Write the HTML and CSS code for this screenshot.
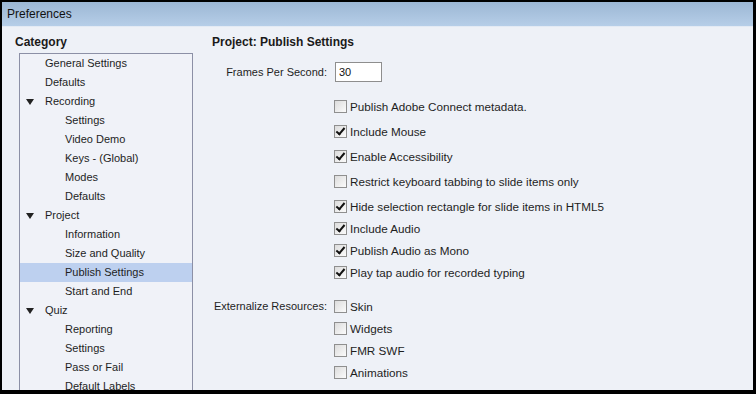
FILE: index.html
```html
<!DOCTYPE html>
<html lang="en">
<head>
    <meta charset="UTF-8">
    <title>Preferences</title>
    <link rel="stylesheet" href="styles.css">
</head>
<body>
    <div class="window">
        <div class="titlebar">Preferences</div>
        <div class="content">
            <!-- Category tree -->
            <div class="sidebar">
                <div class="heading category">Category</div>
                <div class="tree">
                    <div class="row">General Settings</div>
                    <div class="row">Defaults</div>
                    <div class="row group"><span class="arrow"></span>Recording</div>
                    <div class="row sub">Settings</div>
                    <div class="row sub">Video Demo</div>
                    <div class="row sub">Keys - (Global)</div>
                    <div class="row sub">Modes</div>
                    <div class="row sub">Defaults</div>
                    <div class="row group"><span class="arrow"></span>Project</div>
                    <div class="row sub">Information</div>
                    <div class="row sub">Size and Quality</div>
                    <div class="row sub selected">Publish Settings</div>
                    <div class="row sub">Start and End</div>
                    <div class="row group"><span class="arrow"></span>Quiz</div>
                    <div class="row sub">Reporting</div>
                    <div class="row sub">Settings</div>
                    <div class="row sub">Pass or Fail</div>
                    <div class="row sub">Default Labels</div>
                </div>
            </div>

            <!-- Settings panel -->
            <div class="main">
                <div class="heading">Project: Publish Settings</div>

                <div class="field fps">
                    <label class="field-label">Frames Per Second:</label>
                    <input class="text-input" type="text" value="30">
                </div>

                <div class="field options">
                    <div class="field-label"></div>
                    <div class="checks">
                        <div class="check spaced"><span class="box"></span>Publish Adobe Connect metadata.</div>
                        <div class="check spaced"><span class="box on"></span>Include Mouse</div>
                        <div class="check spaced"><span class="box on"></span>Enable Accessibility</div>
                        <div class="check spaced"><span class="box"></span>Restrict keyboard tabbing to slide items only</div>
                        <div class="check"><span class="box on"></span>Hide selection rectangle for slide items in HTML5</div>
                        <div class="check"><span class="box on"></span>Include Audio</div>
                        <div class="check"><span class="box on"></span>Publish Audio as Mono</div>
                        <div class="check"><span class="box on"></span>Play tap audio for recorded typing</div>
                    </div>
                </div>

                <div class="field resources">
                    <div class="field-label">Externalize Resources:</div>
                    <div class="checks">
                        <div class="check"><span class="box"></span>Skin</div>
                        <div class="check"><span class="box"></span>Widgets</div>
                        <div class="check"><span class="box"></span>FMR SWF</div>
                        <div class="check"><span class="box"></span>Animations</div>
                    </div>
                </div>
            </div>
        </div>
    </div>
</body>
</html>
```

FILE: styles.css
```css
body {
    margin: 0;
    background-color: #000;
    font-family: "Liberation Sans", Arial, sans-serif;
    font-size: 11px;
    color: #1e1e1e;
}

.window {
    margin: 2px 3px 0 2px;
    height: 388px;
    background-color: #eef1f7;
    overflow: hidden;
}

.titlebar {
    height: 24px;
    line-height: 25px;
    padding-left: 5px;
    font-size: 12px;
    color: #111;
    background: linear-gradient(#9cb7d4, #b6cee8);
    border-bottom: 1px solid #e3eaf4;
}

.content {
    display: flex;
    padding-top: 7px;
}

.heading {
    font-size: 12px;
    font-weight: bold;
    line-height: 16px;
    color: #1a1a1a;
}

.sidebar {
    width: 191px;
    padding-left: 17px;
    flex-shrink: 0;
}

.category {
    margin-left: -4px;
    margin-bottom: 3px;
}

.tree {
    width: 172px;
    border: 1px solid #8c90a6;
    background-color: #f0f2f8;
}

.row {
    height: 19px;
    line-height: 19px;
    padding-left: 25px;
    white-space: nowrap;
}

.row.group {
    position: relative;
}

.arrow {
    position: absolute;
    left: 6px;
    top: 7px;
    border-left: 4px solid transparent;
    border-right: 4px solid transparent;
    border-top: 6px solid #222;
}

.row.sub {
    padding-left: 45px;
}

.row.selected {
    background-color: #bdd0ef;
}

.main {
    padding-left: 2px;
    flex: 1;
}

.field {
    display: flex;
    gap: 7px;
}

.field-label {
    width: 115px;
    text-align: right;
    flex-shrink: 0;
}

.fps {
    margin-top: 12px;
    align-items: center;
}

.text-input {
    width: 39px;
    height: 14px;
    padding: 2px 3px;
    margin: 0 0 0 1px;
    border: 1px solid #8e8e8e;
    background-color: #fff;
    font-family: inherit;
    font-size: 11px;
    color: #111;
    outline: none;
}

.options {
    margin-top: 13px;
}

.resources {
    margin-top: 12px;
}

.resources .field-label {
    line-height: 22px;
}

.checks {
    display: flex;
    flex-direction: column;
}

.check {
    height: 22px;
    display: flex;
    align-items: center;
    gap: 3px;
    white-space: nowrap;
    font-size: 11.7px;
}

.check.spaced {
    margin-bottom: 3px;
}

.box {
    width: 11px;
    height: 11px;
    border: 1px solid #8f8f8f;
    background: linear-gradient(135deg, #dcdcdc, #fbfbfb);
    position: relative;
    flex-shrink: 0;
}

.box.on::after {
    content: "";
    position: absolute;
    left: 3px;
    top: 0px;
    width: 3px;
    height: 7px;
    border-right: 2px solid #111;
    border-bottom: 2px solid #111;
    transform: rotate(40deg);
}
```
